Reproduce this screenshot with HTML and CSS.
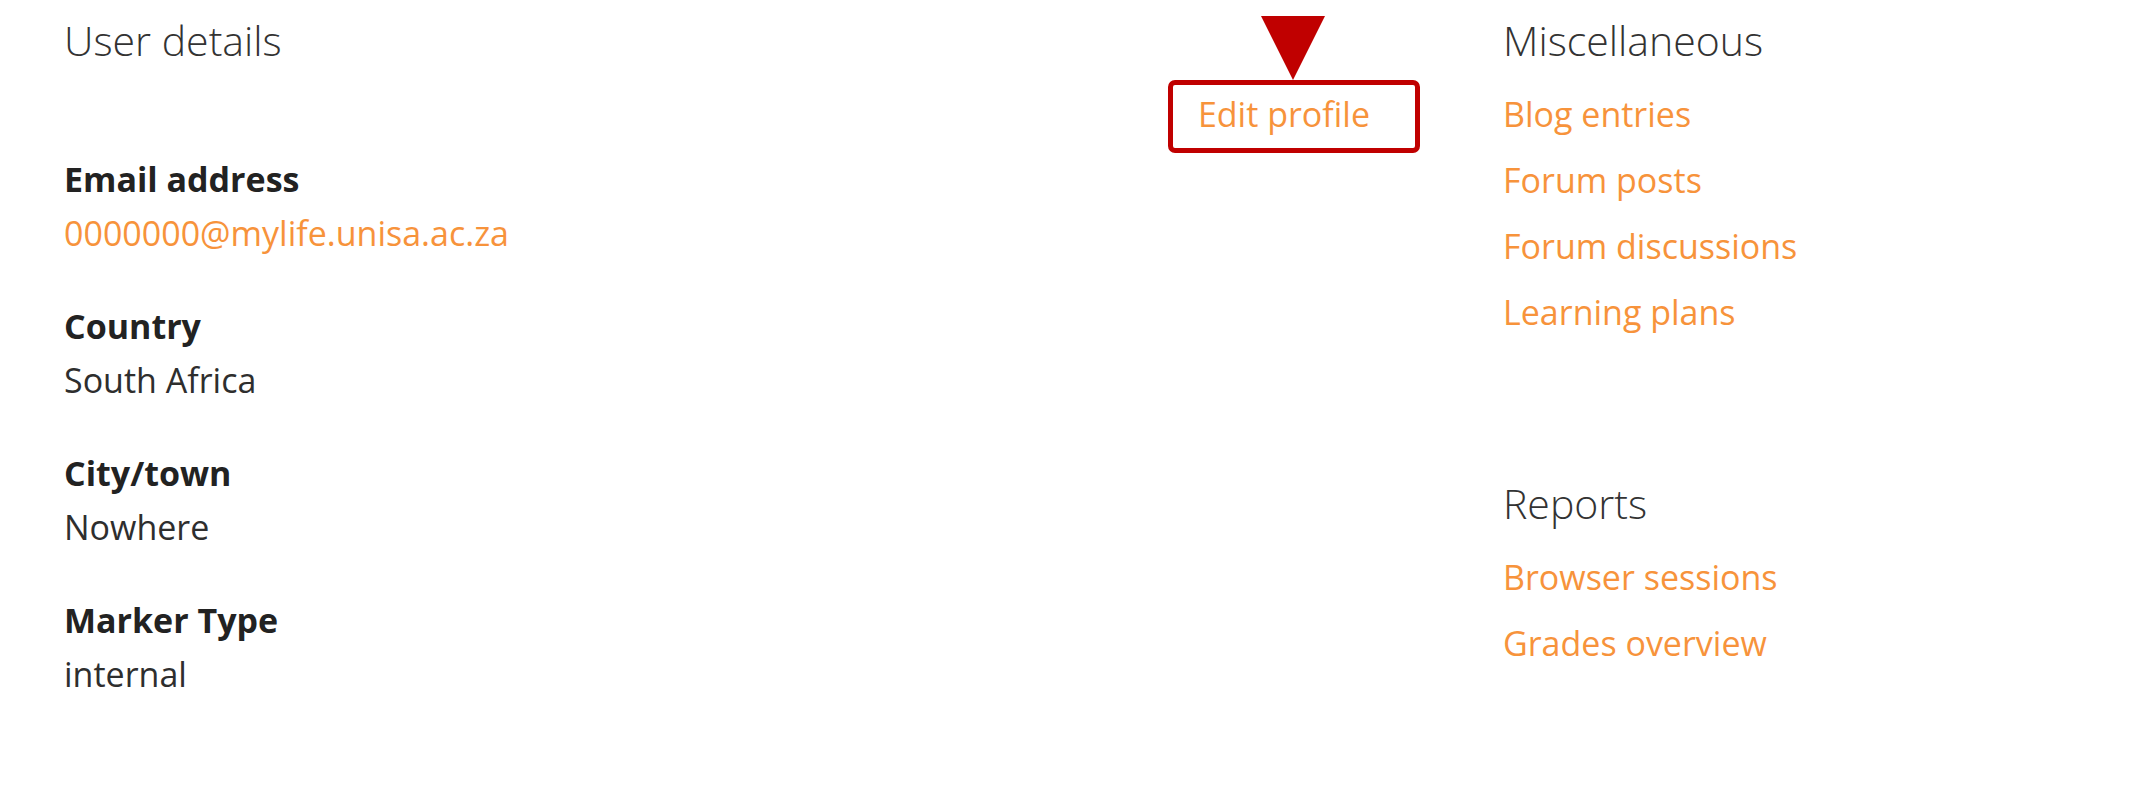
FILE: index.html
```html
<!DOCTYPE html>
<html lang="en">
<head>
<meta charset="utf-8">
<title>User details</title>
<link rel="stylesheet" href="styles.css">
</head>
<body>
<div class="page">
  <section class="details">
    <h3 class="section-title">User details</h3>
    <div class="edit-row">
      <span class="edit-wrap">
        <a class="link" href="#">Edit profile</a>
        <span class="annot-box"></span>
        <svg class="annot-arrow" viewBox="0 0 64 64" width="64" height="64"><polygon points="0,0 64,0 32,64" fill="#c00000"/></svg>
      </span>
    </div>
    <dl class="fields">
      <div class="field"><dt>Email address</dt><dd><a class="link" href="#">0000000@mylife.unisa.ac.za</a></dd></div>
      <div class="field"><dt>Country</dt><dd>South Africa</dd></div>
      <div class="field"><dt>City/town</dt><dd>Nowhere</dd></div>
      <div class="field"><dt>Marker Type</dt><dd>internal</dd></div>
    </dl>
  </section>
  <aside class="side">
    <section class="side-block">
      <h3 class="section-title">Miscellaneous</h3>
      <ul class="links">
        <li><a class="link" href="#">Blog entries</a></li>
        <li><a class="link" href="#">Forum posts</a></li>
        <li><a class="link" href="#">Forum discussions</a></li>
        <li><a class="link" href="#">Learning plans</a></li>
      </ul>
    </section>
    <section class="side-block reports">
      <h3 class="section-title">Reports</h3>
      <ul class="links">
        <li><a class="link" href="#">Browser sessions</a></li>
        <li><a class="link" href="#">Grades overview</a></li>
      </ul>
    </section>
  </aside>
</div>
</body>
</html>
```

FILE: styles.css
```css
html, body {
  margin: 0;
  padding: 0;
  background: #ffffff;
}
body {
  font-family: "Open Sans", "Noto Sans", sans-serif;
  font-size: 34px;
  line-height: 54px;
  color: #2e2e2e;
}
.page {
  display: flex;
  padding-left: 64px;
}
.details {
  width: 1306px;
}
.side {
  margin-left: 133px;
}
.section-title {
  margin: 16px 0 0 0;
  font-size: 41px;
  line-height: 49px;
  font-weight: 300;
  color: #333333;
}
.link {
  color: #f7933b;
  text-decoration: none;
}
.edit-row {
  display: flex;
  justify-content: flex-end;
  margin-top: 22px;
}
.edit-wrap {
  position: relative;
  display: inline-block;
}
.annot-box {
  position: absolute;
  left: -30px;
  top: -7px;
  width: 242px;
  height: 63px;
  border: 5px solid #c00000;
  border-radius: 7px;
}
.annot-arrow {
  position: absolute;
  left: 63px;
  top: -71px;
}
.fields {
  margin: 11px 0 0 0;
}
.field {
  margin-bottom: 39px;
}
.fields dt {
  font-weight: 700;
  color: #222222;
}
.fields dd {
  margin: 0;
  color: #2e2e2e;
}
.links {
  list-style: none;
  margin: 22px 0 0 0;
  padding: 0;
}
.links li {
  margin-bottom: 12px;
}
.reports {
  margin-top: 140px;
}
```
